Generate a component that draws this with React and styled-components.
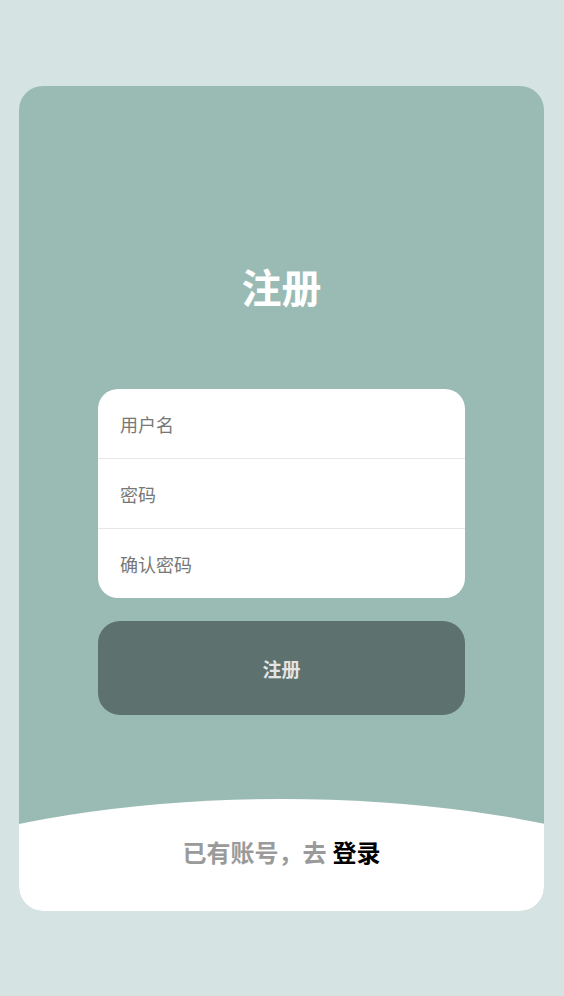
import React from 'react';
import styled, { createGlobalStyle } from 'styled-components';

const GlobalStyle = createGlobalStyle`
  html, body {
    margin: 0;
    padding: 0;
    background: #d5e3e3;
    font-family: "Noto Sans CJK SC", "Noto Sans", sans-serif;
  }
  * { box-sizing: border-box; }
`;

const Page = styled.div`
  min-height: 996px;
  padding-top: 86px;
`;

const Card = styled.div`
  width: 525px;
  height: 825px;
  margin-left: 19px;
  border-radius: 24px;
  background: #99bbb4;
  overflow: hidden;
  display: flex;
  flex-direction: column;
  align-items: center;
`;

const Title = styled.h1`
  margin: 172px 0 0;
  font-size: 40px;
  line-height: 56px;
  font-weight: 700;
  color: #fff;
`;

const Form = styled.div`
  width: 367px;
  margin-top: 75px;
  background: #fff;
  border-radius: 20px;
  overflow: hidden;
  display: flex;
  flex-direction: column;
`;

const Field = styled.input`
  height: ${p => (p.$last ? 69 : 70)}px;
  border: none;
  border-bottom: ${p => (p.$last ? 'none' : '1px solid #e6e6e6')};
  outline: none;
  padding: 0 22px;
  font-family: inherit;
  font-size: 18px;
  color: #333;
  background: transparent;

  &::placeholder {
    color: #777;
  }
`;

const Submit = styled.button`
  width: 367px;
  height: 94px;
  margin-top: 23px;
  border: none;
  border-radius: 22px;
  background: #5d716e;
  color: #e4e4e4;
  font-family: inherit;
  font-size: 19px;
  font-weight: 700;
  cursor: pointer;
`;

// wide ellipse top, clipped by the card; the extra height hangs below the card
const Footer = styled.div`
  margin-top: auto;
  margin-bottom: -68px;
  flex: none;
  width: 1000px;
  height: 180px;
  background: #fff;
  border-radius: 500px 500px 0 0 / 167px 167px 0 0;
  display: flex;
  justify-content: center;
  padding-top: 36px;
  font-size: 24px;
  font-weight: 700;
  line-height: 34px;
  color: #9a9a9a;
`;

const LoginLink = styled.span`
  color: #000;
  margin-left: 6px;
  cursor: pointer;
`;

export default function App() {
  return (
    <Page>
      <GlobalStyle />
      <Card>
        <Title>注册</Title>
        <Form>
          <Field placeholder="用户名" />
          <Field type="password" placeholder="密码" />
          <Field type="password" placeholder="确认密码" $last />
        </Form>
        <Submit>注册</Submit>
        <Footer>
          已有账号，去<LoginLink>登录</LoginLink>
        </Footer>
      </Card>
    </Page>
  );
}
